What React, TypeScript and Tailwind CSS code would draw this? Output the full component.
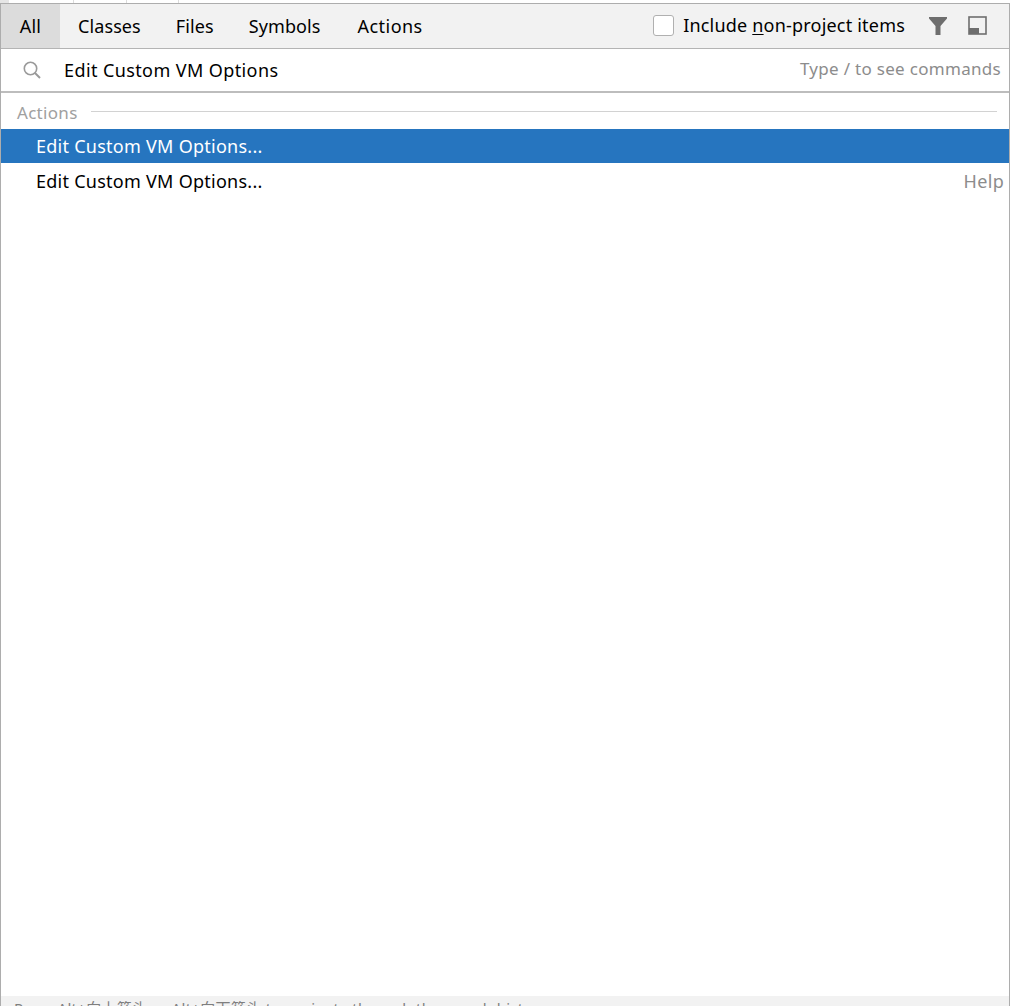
const tabs = ["Classes", "Files", "Symbols"]

function SearchIcon() {
  return (
    <svg width="20" height="20" viewBox="0 0 20 20" fill="none" stroke="#9a9a9a" strokeWidth="1.6">
      <circle cx="8.5" cy="8.5" r="6.2" />
      <path d="M13 13l5 5" strokeWidth="2" />
    </svg>
  )
}

function FilterIcon() {
  return (
    <svg width="20" height="20" viewBox="0 0 20 20" fill="#6e6e6e">
      <path d="M1 1h18v1.5L12.5 10v9h-5v-9L1 2.5z" />
    </svg>
  )
}

function PreviewIcon() {
  return (
    <svg width="20" height="20" viewBox="0 0 20 20" fill="none">
      <rect x="1" y="1" width="17" height="17" stroke="#6e6e6e" strokeWidth="1.6" />
      <rect x="1" y="12" width="10" height="6" fill="#6e6e6e" />
    </svg>
  )
}

export default function App() {
  return (
    <div className="h-[1006px] w-[1010px] overflow-hidden bg-white font-['Noto_Sans','Noto_Sans_CJK_SC',sans-serif] text-[18px] text-black">
      {/* Window behind the popup */}
      <div className="flex h-[3px] bg-white">
        <div className="w-[9px] bg-[#e6e6e6]" />
        <div className="w-[65px] border-r border-[#dcdcdc]" />
        <div className="w-[53px] border-r border-[#dcdcdc]" />
        <div className="w-[52px] border-r border-[#dcdcdc]" />
      </div>

      <div className="flex h-[1003px] flex-col border-x border-t border-[#adadad]">
        {/* Tabs */}
        <div className="flex h-[45px] shrink-0 items-center border-b border-[#b4b4b4] bg-[#f2f2f2]">
          <div className="flex h-full w-[59px] items-center justify-center bg-[#dcdcdc] tracking-[0.2px]">All</div>
          <div className="ml-[18px] flex gap-[35px] tracking-[0.1px]">
            {tabs.map((tab) => (
              <span key={tab}>{tab}</span>
            ))}
          </div>
          <span className="ml-[37px] tracking-[0.45px]">Actions</span>
          <div className="ml-auto mt-[-2px] flex items-center">
            <div className="h-[21px] w-[21px] rounded-[3px] border border-[#b0b0b0] bg-white" />
            <span className="ml-[9px] mr-[23px] tracking-[0.2px]">
              Include <span className="underline underline-offset-2">n</span>on-project items
            </span>
            <div className="mt-[2px] flex">
              <FilterIcon />
            </div>
            <div className="ml-[20px] mr-[21px] mt-[2px] flex">
              <PreviewIcon />
            </div>
          </div>
        </div>

        {/* Search field */}
        <div className="flex h-[44px] shrink-0 items-center border-b-2 border-[#bdbdbd] pl-[21px] pr-[8px]">
          <SearchIcon />
          <span className="ml-[22px] tracking-[0.4px]">Edit Custom VM Options</span>
          <span className="ml-auto mt-[-2px] text-[17px] tracking-[0.3px] text-[#8c8c8c]">Type / to see commands</span>
        </div>

        {/* Results */}
        <div className="flex-1">
          <div className="flex h-[36px] items-center pl-[16px] pr-[12px]">
            <span className="mt-[4px] text-[17px] tracking-[0.3px] text-[#a0a0a0]">Actions</span>
            <div className="ml-[13px] h-px flex-1 bg-[#d2d2d2]" />
          </div>
          <div className="flex h-[34px] items-center bg-[#2675bf] pl-[35px] tracking-[0.26px] text-white">
            Edit Custom VM Options...
          </div>
          <div className="flex h-[35px] items-center justify-between pl-[35px] pr-[5px] pt-[1px]">
            <span className="tracking-[0.26px]">Edit Custom VM Options...</span>
            <span className="tracking-[0.3px] text-[#8c8c8c]">Help</span>
          </div>
        </div>

        {/* Footer hint, cut off by the window edge */}
        <div className="h-[10px] shrink-0 overflow-hidden whitespace-nowrap bg-[#f2f2f2] pl-[13px] pt-[1px] text-[15px] leading-[22px] tracking-[0.3px] text-[#7f7f7f]">
          Press Alt+向上箭头 or Alt+向下箭头 to navigate through the search history
        </div>
      </div>
    </div>
  )
}
